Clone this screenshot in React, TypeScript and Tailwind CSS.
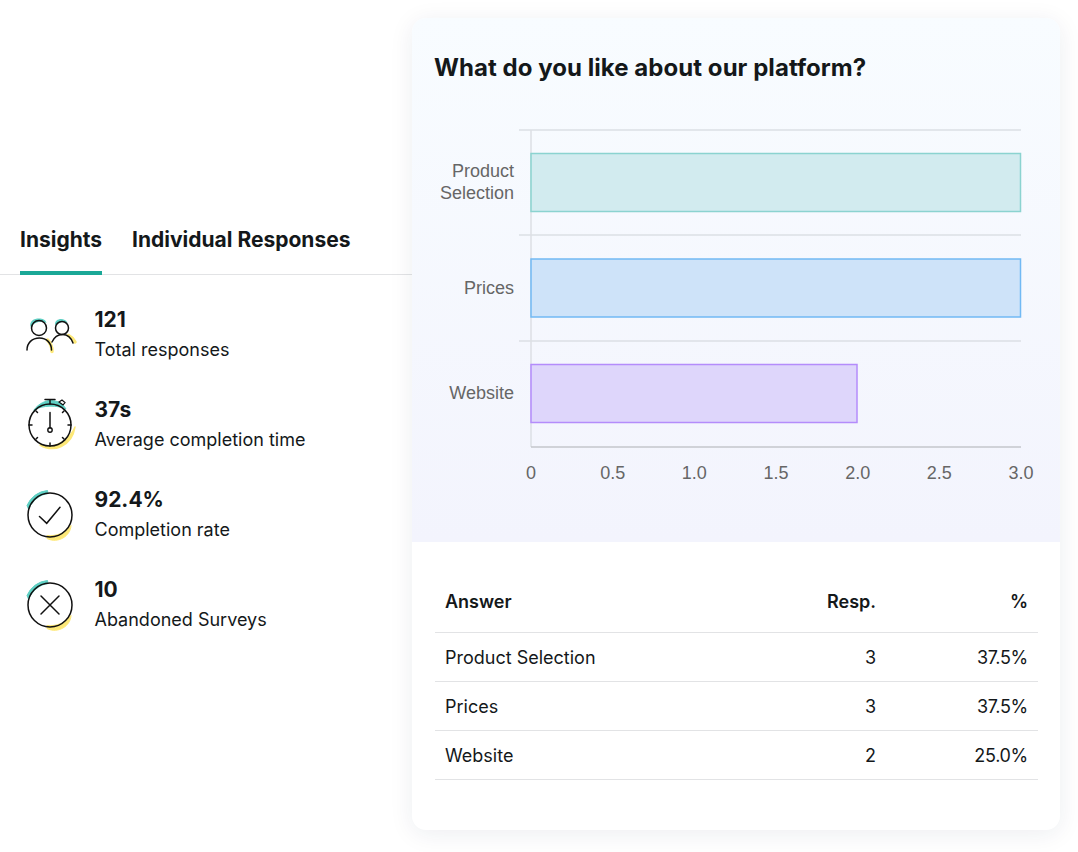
import React from 'react';

const stats = [
  { value: '121', label: 'Total responses', icon: 'people' },
  { value: '37s', label: 'Average completion time', icon: 'timer' },
  { value: '92.4%', label: 'Completion rate', icon: 'check' },
  { value: '10', label: 'Abandoned Surveys', icon: 'cross' },
];

const rows = [
  { answer: 'Product Selection', resp: 3, pct: '37.5%' },
  { answer: 'Prices', resp: 3, pct: '37.5%' },
  { answer: 'Website', resp: 2, pct: '25.0%' },
];

const TEAL = '#5ecfc3';
const YELLOW = '#fde878';
const INK = '#111';

const StatIcon: React.FC<{ name: string }> = ({ name }) => {
  if (name === 'people') {
    return (
      <svg width="54" height="40" viewBox="24 314 54 40" fill="none" strokeLinecap="round">
        <path d="M30.5 326C29 320 34 317.5 39 317.5C42.5 317.5 45.5 318.5 46.5 322C41 319.5 35 321 30.5 326Z" fill={TEAL} />
        <path d="M55 324C54.5 320 58 318 61 318C63.5 318 66.5 319 67.5 322C63 320 59 321 55 324Z" fill={TEAL} />
        <path d="M47.5 339C50.5 342 52 346 52 350.5" stroke={YELLOW} strokeWidth="3.5" />
        <path d="M68.5 334.5C71.5 336 73.5 338 75 341" stroke={YELLOW} strokeWidth="3.5" />
        <circle cx="39" cy="327" r="7.5" stroke={INK} strokeWidth="1.5" />
        <circle cx="62" cy="327" r="6.5" stroke={INK} strokeWidth="1.5" />
        <path d="M27 349C27 342 32 337 39.5 337C46.5 337 51.5 342 51.5 349" stroke={INK} strokeWidth="1.5" />
        <path d="M52 341C54.5 335.5 58 333.5 62.5 333.5C67 333.5 71 336.5 73 342" stroke={INK} strokeWidth="1.5" />
      </svg>
    );
  }
  if (name === 'timer') {
    return (
      <svg width="54" height="56" viewBox="-26 -28 54 56" fill="none" strokeLinecap="round">
        <path d="M-16 -15C-11 -22 -4 -24.5 1 -24.5C8 -24.5 13 -21 16 -16C8 -20 -8 -20 -16 -15Z" fill={TEAL} stroke={TEAL} strokeWidth="1" strokeLinejoin="round" />
        <path d="M-10 20C3 28 22 22 25 2C21 12 12 19 2 21C-2 21.5 -6 21 -10 20Z" fill={YELLOW} stroke={YELLOW} strokeWidth="1.5" strokeLinejoin="round" />
        <circle cx="0" cy="0" r="21" stroke={INK} strokeWidth="1.5" />
        <path d="M-5 -25.5H5M0 -25.5V-21M0 -12.5V3" stroke={INK} strokeWidth="1.5" />
        <circle cx="0" cy="5" r="2.2" stroke={INK} strokeWidth="1.4" />
        <path d="M0 18V21M-21 0H-18M18 0H21M-14 -14L-12.5 -12.5M14 -14L12.5 -12.5M-14 14L-12.5 12.5M14 14L12.5 12.5" stroke={INK} strokeWidth="1.5" />
        <path d="M9 -23L12 -25L15 -22.5L13 -20Z" stroke={INK} strokeWidth="1.2" />
      </svg>
    );
  }
  return (
    <svg width="54" height="52" viewBox="-26 -26 54 52" fill="none">
      <path d="M-23 -9.5A24.5 24.5 0 0 1 -2.5 -24.5L-2 -21.5C-10 -20.5 -17 -15 -21.5 -6Z" fill={TEAL} stroke={TEAL} strokeWidth="1" strokeLinejoin="round" />
      <path d="M-3 20.5C6 21.5 16 18 21 10.5C20.5 21 8 29 -3 23.5Z" fill={YELLOW} stroke={YELLOW} strokeWidth="1" strokeLinejoin="round" />
      <circle cx="0" cy="0" r="22" stroke={INK} strokeWidth="1.5" />
      {name === 'check' ? (
        <path d="M-10.5 1.5L-3.3 8.3L10 -7.7" stroke={INK} strokeWidth="1.5" strokeLinecap="round" />
      ) : (
        <path d="M-9 -9L9 9M9 -9L-9 9" stroke={INK} strokeWidth="1.5" strokeLinecap="round" />
      )}
    </svg>
  );
};

const Chart: React.FC = () => {
  const ticks = ['0', '0.5', '1.0', '1.5', '2.0', '2.5', '3.0'];
  const label = { fontFamily: '"Liberation Sans", Arial, sans-serif', fontSize: 18, fill: '#666' };
  return (
    <svg width="648" height="420" viewBox="0 0 648 420" className="block">
      {/* grid, origin is card x=412 y=110 */}
      <path d="M107 20H609M107 125H609M107 231H609" stroke="#dcdfe5" strokeWidth="1.5" />
      <path d="M119 20V337" stroke="#dcdfe5" strokeWidth="1.5" />
      <path d="M119 337H609" stroke="#c4c6cb" strokeWidth="1.5" />
      <rect x="119" y="43.5" width="489.5" height="58" fill="#d2ebef" stroke="#8bd3d0" strokeWidth="1.5" />
      <rect x="119" y="149" width="489.5" height="58" fill="#cee3f9" stroke="#71b9f4" strokeWidth="1.5" />
      <rect x="119" y="254.5" width="326" height="58" fill="#ded6fb" stroke="#b48cfb" strokeWidth="1.5" />
      <text x="102" y="67" textAnchor="end" {...label}>Product</text>
      <text x="102" y="89" textAnchor="end" {...label}>Selection</text>
      <text x="102" y="184" textAnchor="end" {...label}>Prices</text>
      <text x="102" y="289" textAnchor="end" {...label}>Website</text>
      {ticks.map((t, i) => (
        <text key={t} x={119 + i * 81.67} y="369" textAnchor="middle" {...label}>{t}</text>
      ))}
    </svg>
  );
};

export default function App() {
  return (
    <div className="w-[1078px] h-[852px] bg-white flex font-['Inter',sans-serif] text-[#14181a] overflow-hidden">
      {/* Left column */}
      <div className="w-[412px] shrink-0 pt-[222px]">
        <div className="flex gap-[30px] px-5 h-[53px] border-b border-[#e2e3e5]">
          <div className="h-[53px] border-b-4 border-[#1aa897] text-[21px] leading-[36px] font-bold">Insights</div>
          <div className="text-[21px] leading-[36px] font-bold">Individual Responses</div>
        </div>
        <div className="pt-[30px] pl-[24px] flex flex-col gap-[30px]">
          {stats.map((s) => (
            <div key={s.label} className="flex h-[60px]">
              <div className="w-[70.5px] h-[60px] shrink-0 flex items-center">
                <StatIcon name={s.icon} />
              </div>
              <div>
                <div className="text-[21px] leading-[30px] font-bold">{s.value}</div>
                <div className="text-[18px] leading-[30px]">{s.label}</div>
              </div>
            </div>
          ))}
        </div>
      </div>

      {/* Question card */}
      <div className="w-[648px] h-[812px] mt-[18px] rounded-[14px] bg-white shadow-[0_4px_24px_rgba(30,40,80,0.08)] overflow-hidden">
        <div className="h-[524px] bg-gradient-to-b from-[#f8fcff] to-[#f3f4fd]">
          <h2 className="h-[92px] pl-[22px] pt-[32px] text-[24px] leading-[36px] font-bold tracking-[0.05px]">What do you like about our platform?</h2>
          <Chart />
        </div>
        <div className="pt-[30px] pl-[23px]">
          <table className="w-[603px] text-[18px] border-collapse">
            <thead>
              <tr className="border-b border-[#e2e3e5] h-[60px]">
                <th className="text-left font-semibold pl-[10px]">Answer</th>
                <th className="text-right font-semibold">Resp.</th>
                <th className="text-right font-semibold pr-[10px] w-[162px]">%</th>
              </tr>
            </thead>
            <tbody>
              {rows.map((r) => (
                <tr key={r.answer} className="border-b border-[#e2e3e5] h-[49px]">
                  <td className="pl-[10px] pt-px">{r.answer}</td>
                  <td className="text-right pt-px">{r.resp}</td>
                  <td className="text-right pr-[10px] pt-px tracking-[-0.3px]">{r.pct}</td>
                </tr>
              ))}
            </tbody>
          </table>
        </div>
      </div>
    </div>
  );
}
